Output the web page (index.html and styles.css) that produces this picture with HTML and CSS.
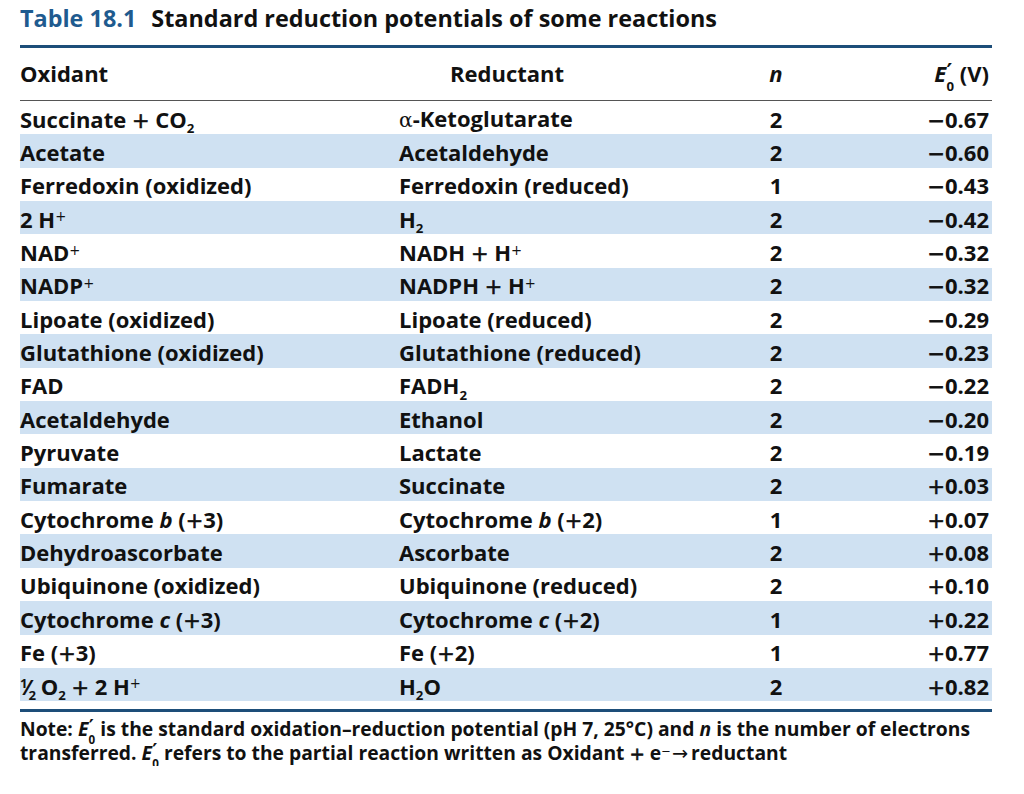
FILE: index.html
```html
<!DOCTYPE html>
<html>
<head>
<meta charset="utf-8">
<link rel="stylesheet" href="styles.css">
</head>
<body>
<div class="page">
  <h1 class="title"><span class="num">Table 18.1</span><span class="cap">Standard reduction potentials of some reactions</span></h1>
  <table class="tbl">
    <colgroup><col class="c1"><col class="c2"><col class="c3"><col class="c4"></colgroup>
    <thead>
      <tr><th class="ox">Oxidant</th><th class="red">Reductant</th><th class="n"><i>n</i></th><th class="e"><i>E</i><span class="st"><span class="p">′</span><span class="z">0</span></span> (V)</th></tr>
    </thead>
    <tbody>
      <tr><td>Succinate <span class="op">+</span> CO<sub>2</sub></td><td><span class="al">α</span>-Ketoglutarate</td><td class="n">2</td><td class="e"><span class="op">−</span>0.67</td></tr>
      <tr class="s"><td>Acetate</td><td>Acetaldehyde</td><td class="n">2</td><td class="e"><span class="op">−</span>0.60</td></tr>
      <tr><td>Ferredoxin (oxidized)</td><td>Ferredoxin (reduced)</td><td class="n">1</td><td class="e"><span class="op">−</span>0.43</td></tr>
      <tr class="s"><td>2 H<sup><span class="op">+</span></sup></td><td>H<sub>2</sub></td><td class="n">2</td><td class="e"><span class="op">−</span>0.42</td></tr>
      <tr><td>NAD<sup><span class="op">+</span></sup></td><td>NADH <span class="op">+</span> H<sup><span class="op">+</span></sup></td><td class="n">2</td><td class="e"><span class="op">−</span>0.32</td></tr>
      <tr class="s"><td>NADP<sup><span class="op">+</span></sup></td><td>NADPH <span class="op">+</span> H<sup><span class="op">+</span></sup></td><td class="n">2</td><td class="e"><span class="op">−</span>0.32</td></tr>
      <tr><td>Lipoate (oxidized)</td><td>Lipoate (reduced)</td><td class="n">2</td><td class="e"><span class="op">−</span>0.29</td></tr>
      <tr class="s"><td>Glutathione (oxidized)</td><td>Glutathione (reduced)</td><td class="n">2</td><td class="e"><span class="op">−</span>0.23</td></tr>
      <tr><td>FAD</td><td>FADH<sub>2</sub></td><td class="n">2</td><td class="e"><span class="op">−</span>0.22</td></tr>
      <tr class="s"><td>Acetaldehyde</td><td>Ethanol</td><td class="n">2</td><td class="e"><span class="op">−</span>0.20</td></tr>
      <tr><td>Pyruvate</td><td>Lactate</td><td class="n">2</td><td class="e"><span class="op">−</span>0.19</td></tr>
      <tr class="s"><td>Fumarate</td><td>Succinate</td><td class="n">2</td><td class="e"><span class="op">+</span>0.03</td></tr>
      <tr><td>Cytochrome <i>b</i> (<span class="op">+</span>3)</td><td>Cytochrome <i>b</i> (<span class="op">+</span>2)</td><td class="n">1</td><td class="e"><span class="op">+</span>0.07</td></tr>
      <tr class="s"><td>Dehydroascorbate</td><td>Ascorbate</td><td class="n">2</td><td class="e"><span class="op">+</span>0.08</td></tr>
      <tr><td>Ubiquinone (oxidized)</td><td>Ubiquinone (reduced)</td><td class="n">2</td><td class="e"><span class="op">+</span>0.10</td></tr>
      <tr class="s"><td>Cytochrome <i>c</i> (<span class="op">+</span>3)</td><td>Cytochrome <i>c</i> (<span class="op">+</span>2)</td><td class="n">1</td><td class="e"><span class="op">+</span>0.22</td></tr>
      <tr><td>Fe (<span class="op">+</span>3)</td><td>Fe (<span class="op">+</span>2)</td><td class="n">1</td><td class="e"><span class="op">+</span>0.77</td></tr>
      <tr class="s"><td><span class="frac"><sup>1</sup>⁄<sub>2</sub></span> O<sub>2</sub> <span class="op">+</span> 2 H<sup><span class="op">+</span></sup></td><td>H<sub>2</sub>O</td><td class="n">2</td><td class="e"><span class="op">+</span>0.82</td></tr>
    </tbody>
  </table>
  <p class="note">Note: <i>E</i><span class="st"><span class="p">′</span><span class="z">0</span></span> is the standard oxidation–reduction potential (pH 7, 25°C) and <i>n</i> is the number of electrons transferred. <i>E</i><span class="st"><span class="p">′</span><span class="z">0</span></span> refers to the partial reaction written as Oxidant <span class="op">+</span> e<sup><span class="op">−</span></sup><span class="arr">→</span>reductant</p>
</div>
</body>
</html>
```
FILE: styles.css
```css
html, body {
  margin: 0;
  padding: 0;
  background: #ffffff;
}
body {
  font-family: "Open Sans", "Liberation Sans", sans-serif;
  color: #111111;
}
.page {
  width: 972px;
  padding: 0 0 0 20px;
}
.title {
  margin: 0;
  padding-top: 3px;
  height: 48px;
  box-sizing: border-box;
  font-size: 23.4px;
  font-weight: 700;
  line-height: 30px;
  border-bottom: 3px solid #1d4e79;
  white-space: nowrap;
}
.title .num {
  color: #1f5b8f;
  margin-right: 15px;
}
.title .cap {
  color: #111111;
}
.tbl {
  width: 972px;
  border-collapse: collapse;
  table-layout: fixed;
  font-size: 22px;
  font-weight: 700;
}
.c1 { width: 379px; }
.c2 { width: 301px; }
.c3 { width: 152px; }
.c4 { width: 140px; }
.tbl th {
  height: 49px;
  font-weight: 700;
  text-align: left;
  padding: 0 0 3px 0;
  border-bottom: 1px solid #555555;
  vertical-align: middle;
  white-space: nowrap;
}
.tbl th.red { padding-left: 51px; }
.tbl td {
  height: 31.35px;
  padding: 2px 0 0 0;
  line-height: 24px;
  vertical-align: middle;
  white-space: nowrap;
}
.tbl th.n, .tbl td.n { text-align: center; }
.tbl th.e, .tbl td.e { text-align: right; padding-right: 3px; }
.tbl tr.s td { background: #cfe1f2; }
.op {
  font-family: "DejaVu Sans", sans-serif;
  font-weight: 400;
  font-size: 0.95em;
  line-height: 0;
  -webkit-text-stroke: 0.6px #111111;
}
.al {
  font-family: "DejaVu Serif", serif;
  font-weight: 400;
  font-size: 0.92em;
}
.arr {
  font-family: "DejaVu Sans", sans-serif;
  font-weight: 400;
  margin: 0 3px 0 1px;
}
sub, sup {
  font-size: 0.6em;
  line-height: 0;
  position: relative;
  vertical-align: baseline;
}
sub { top: 0.4em; }
sup { top: -0.48em; }
sup .op {
  -webkit-text-stroke: 0;
  font-size: 1em;
}
.frac { letter-spacing: -1px; }
.frac sup { top: -0.5em; }
.frac sub { top: 0.4em; }
.st {
  display: inline-block;
  vertical-align: -0.42em;
  width: 0.36em;
  margin: -0.4em 0;
  text-align: left;
  font-style: normal;
}
.st .p {
  display: block;
  height: 0.55em;
  line-height: 0.55em;
  font-family: "DejaVu Sans", sans-serif;
  font-weight: 700;
  font-size: 1em;
  font-style: normal;
  margin-left: 0.02em;
  position: relative;
  top: -0.08em;
}
.st .z {
  display: block;
  font-size: 0.6em;
  line-height: 1em;
  height: 1em;
  margin-left: 0.02em;
}
.note {
  margin: 8px 0 0 0;
  padding-top: 5px;
  border-top: 3px solid #1d4e79;
  font-size: 19.3px;
  font-weight: 700;
  line-height: 24px;
  width: 972px;
}
```
